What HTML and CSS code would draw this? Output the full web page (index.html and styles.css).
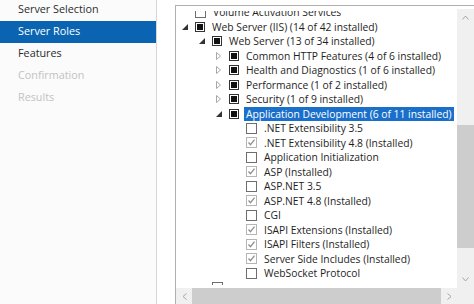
FILE: index.html
```html
<!DOCTYPE html>
<html lang="en">
<head>
    <meta charset="UTF-8">
    <meta name="viewport" content="width=device-width, initial-scale=1.0">
    <title>Add Roles and Features</title>
    <link rel="stylesheet" href="styles.css">
</head>
<body>

<div class="wizard">
    <!-- wizard steps -->
    <nav class="steps">
        <div class="step">Server Selection</div>
        <div class="step active">Server Roles</div>
        <div class="step">Features</div>
        <div class="step disabled">Confirmation</div>
        <div class="step disabled">Results</div>
    </nav>

    <div class="content">
        <div class="tree-box">
            <div class="tree-view">
                <div class="tree-rows">
                    <div class="row lvl0">
                        <span class="exp"></span>
                        <span class="cb"></span>
                        <span class="label">Volume Activation Services</span>
                    </div>
                    <div class="row lvl0">
                        <span class="exp"><svg width="6" height="6"><path d="M6 0V6H0Z" fill="#333"/></svg></span>
                        <span class="cb part"></span>
                        <span class="label">Web Server (IIS) (14 of 42 installed)</span>
                    </div>
                    <div class="row lvl1">
                        <span class="exp"><svg width="6" height="6"><path d="M6 0V6H0Z" fill="#333"/></svg></span>
                        <span class="cb part"></span>
                        <span class="label">Web Server (13 of 34 installed)</span>
                    </div>
                    <div class="row lvl2">
                        <span class="exp"><svg width="5" height="8"><path d="M.5 .5L4.5 4L.5 7.5Z" fill="none" stroke="#a8a8a8"/></svg></span>
                        <span class="cb part"></span>
                        <span class="label">Common HTTP Features (4 of 6 installed)</span>
                    </div>
                    <div class="row lvl2">
                        <span class="exp"><svg width="5" height="8"><path d="M.5 .5L4.5 4L.5 7.5Z" fill="none" stroke="#a8a8a8"/></svg></span>
                        <span class="cb part"></span>
                        <span class="label">Health and Diagnostics (1 of 6 installed)</span>
                    </div>
                    <div class="row lvl2">
                        <span class="exp"><svg width="5" height="8"><path d="M.5 .5L4.5 4L.5 7.5Z" fill="none" stroke="#a8a8a8"/></svg></span>
                        <span class="cb part"></span>
                        <span class="label">Performance (1 of 2 installed)</span>
                    </div>
                    <div class="row lvl2">
                        <span class="exp"><svg width="5" height="8"><path d="M.5 .5L4.5 4L.5 7.5Z" fill="none" stroke="#a8a8a8"/></svg></span>
                        <span class="cb part"></span>
                        <span class="label">Security (1 of 9 installed)</span>
                    </div>
                    <div class="row lvl2">
                        <span class="exp"><svg width="6" height="6"><path d="M6 0V6H0Z" fill="#333"/></svg></span>
                        <span class="cb part"></span>
                        <span class="label selected">Application Development (6 of 11 installed)</span>
                    </div>
                    <div class="row lvl3">
                        <span class="cb"></span>
                        <span class="label">.NET Extensibility 3.5</span>
                    </div>
                    <div class="row lvl3">
                        <span class="cb on"><svg width="9" height="9"><path d="M1.5 4.5l2 2.2 4-5" fill="none" stroke="#8f8f8f" stroke-width="1.3"/></svg></span>
                        <span class="label">.NET Extensibility 4.8 (Installed)</span>
                    </div>
                    <div class="row lvl3">
                        <span class="cb"></span>
                        <span class="label">Application Initialization</span>
                    </div>
                    <div class="row lvl3">
                        <span class="cb on"><svg width="9" height="9"><path d="M1.5 4.5l2 2.2 4-5" fill="none" stroke="#8f8f8f" stroke-width="1.3"/></svg></span>
                        <span class="label">ASP (Installed)</span>
                    </div>
                    <div class="row lvl3">
                        <span class="cb"></span>
                        <span class="label">ASP.NET 3.5</span>
                    </div>
                    <div class="row lvl3">
                        <span class="cb on"><svg width="9" height="9"><path d="M1.5 4.5l2 2.2 4-5" fill="none" stroke="#8f8f8f" stroke-width="1.3"/></svg></span>
                        <span class="label">ASP.NET 4.8 (Installed)</span>
                    </div>
                    <div class="row lvl3">
                        <span class="cb"></span>
                        <span class="label">CGI</span>
                    </div>
                    <div class="row lvl3">
                        <span class="cb on"><svg width="9" height="9"><path d="M1.5 4.5l2 2.2 4-5" fill="none" stroke="#8f8f8f" stroke-width="1.3"/></svg></span>
                        <span class="label">ISAPI Extensions (Installed)</span>
                    </div>
                    <div class="row lvl3">
                        <span class="cb on"><svg width="9" height="9"><path d="M1.5 4.5l2 2.2 4-5" fill="none" stroke="#8f8f8f" stroke-width="1.3"/></svg></span>
                        <span class="label">ISAPI Filters (Installed)</span>
                    </div>
                    <div class="row lvl3">
                        <span class="cb on"><svg width="9" height="9"><path d="M1.5 4.5l2 2.2 4-5" fill="none" stroke="#8f8f8f" stroke-width="1.3"/></svg></span>
                        <span class="label">Server Side Includes (Installed)</span>
                    </div>
                    <div class="row lvl3">
                        <span class="cb"></span>
                        <span class="label">WebSocket Protocol</span>
                    </div>
                    <div class="row lvl1">
                        <span class="exp"></span>
                        <span class="cb"></span>
                    </div>
                </div>
            </div>

            <!-- vertical scrollbar -->
            <div class="vscroll">
                <div class="sb-btn"><svg width="7" height="5"><path d="M.5 4.5L3.5 1L6.5 4.5" fill="none" stroke="#a6a6a6"/></svg></div>
                <div class="vtrack"><div class="vthumb"></div></div>
                <div class="sb-btn"><svg width="7" height="5"><path d="M.5 .5L3.5 4L6.5 .5" fill="none" stroke="#a6a6a6"/></svg></div>
            </div>

            <!-- horizontal scrollbar -->
            <div class="hscroll">
                <div class="sb-btn"><svg width="5" height="7"><path d="M4.5 .5L1 3.5L4.5 6.5" fill="none" stroke="#a6a6a6"/></svg></div>
                <div class="hthumb"></div>
                <div class="sb-btn"><svg width="5" height="7"><path d="M.5 .5L4 3.5L.5 6.5" fill="none" stroke="#a6a6a6"/></svg></div>
            </div>
            <div class="corner"></div>
        </div>
    </div>
</div>

</body>
</html>
```

FILE: styles.css
```css
body {
    margin: 0;
    padding: 0;
    width: 474px;
    height: 304px;
    overflow: hidden;
    background-color: #fff;
    font-family: "Open Sans", "Noto Sans", sans-serif;
    color: #1e1e1e;
}

.wizard {
    display: flex;
    height: 304px;
}

/* left steps panel */
.steps {
    width: 156px;
    flex-shrink: 0;
    background-color: #fbfbfb;
    border-right: 1px solid #d6d6d6;
}

.step {
    height: 22px;
    line-height: 20px;
    padding-left: 18px;
    font-size: 10.8px;
    color: #2b2b2b;
}

.step:first-child {
    margin-top: -1px;
}

.step.active {
    background-color: #0a64b2;
    color: #fff;
}

.step.disabled {
    color: #c2c2c2;
}

/* tree */
.content {
    flex: 1;
    padding: 5px 0 0 18px;
    margin-right: -1px;
}

.tree-box {
    height: 300px;
    border: 1px solid #b0b0b0;
    padding-top: 3px;
    box-sizing: border-box;
    display: grid;
    grid-template-columns: 1fr 17px;
    grid-template-rows: 1fr 16px;
}

.tree-view {
    overflow: hidden;
    margin-top: 2px;
    margin-bottom: 3px;
}

.tree-rows {
    margin-top: -6px;
}

.row {
    height: 14.5px;
    display: flex;
    align-items: center;
    white-space: nowrap;
    font-size: 10.3px;
}

.lvl0 { padding-left: 5px; }
.lvl1 { padding-left: 22px; }
.lvl2 { padding-left: 39px; }
.lvl3 { padding-left: 70px; }

.exp {
    width: 14px;
    height: 10px;
    flex-shrink: 0;
    display: flex;
    align-items: center;
    padding-left: 1px;
    box-sizing: border-box;
}

.cb {
    width: 10px;
    height: 10px;
    flex-shrink: 0;
    border: 1px solid #333;
    box-sizing: border-box;
    background-color: #fff;
    display: flex;
    align-items: center;
    justify-content: center;
    margin-right: 7px;
}

.lvl3 .cb,
.lvl0:first-child .cb,
.lvl1:last-child .cb {
    width: 11px;
    height: 11px;
    border-color: #6e6e6e;
}

.lvl3 .cb.on {
    border-color: #b5b5b5;
}

.cb.part::after {
    content: "";
    width: 6px;
    height: 6px;
    background-color: #111;
}

.label {
    padding: 1px 2px;
    margin-left: -2px;
    line-height: 12px;
}

.label.selected {
    background-color: #1a6fcb;
    color: #fff;
}

/* scrollbars */
.vscroll {
    background-color: #f0f0f0;
    display: flex;
    flex-direction: column;
}

.sb-btn {
    width: 17px;
    height: 17px;
    flex-shrink: 0;
    display: flex;
    align-items: center;
    justify-content: center;
}

.vtrack {
    flex: 1;
    padding-top: 99px;
}

.vthumb {
    width: 17px;
    height: 123px;
    background-color: #cdcdcd;
}

.hscroll {
    background-color: #f0f0f0;
    display: flex;
}

.hscroll .sb-btn {
    width: 16px;
    height: 16px;
}

.hthumb {
    flex: 1;
    background-color: #cdcdcd;
}

.corner {
    background-color: #f0f0f0;
}
```
